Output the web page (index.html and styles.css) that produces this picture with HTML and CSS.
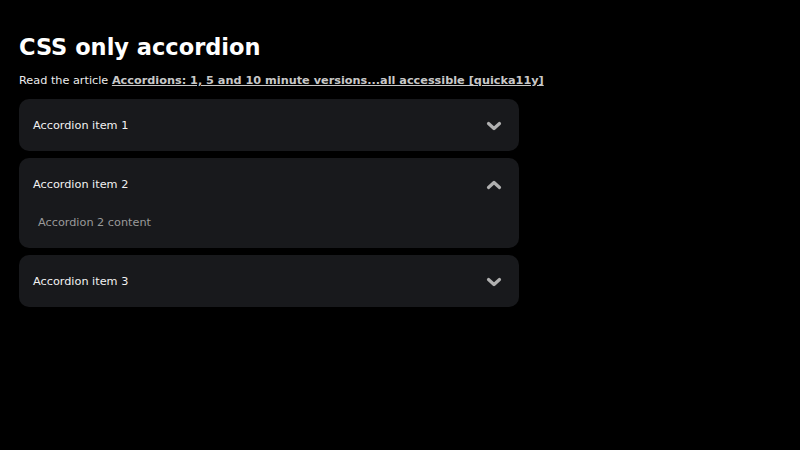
FILE: index.html
```html
<!DOCTYPE html>
<html lang="en">
<head>
<meta charset="utf-8">
<title>CSS only accordion</title>
<link rel="stylesheet" href="styles.css">
</head>
<body>
<main class="page">
  <h1 class="title">CSS only accordion</h1>
  <p class="intro">Read the article <a class="intro-link" href="#">Accordions: 1, 5 and 10 minute versions...all accessible [quicka11y]</a></p>
  <div class="accordion">
    <details class="item">
      <summary class="item-head"><span>Accordion item 1</span><svg class="chev" viewBox="0 0 16 10" width="16" height="10"><polyline points="2.5,2.5 8,7.5 13.5,2.5"/></svg></summary>
      <div class="item-body">Accordion 1 content</div>
    </details>
    <details class="item" open>
      <summary class="item-head"><span>Accordion item 2</span><svg class="chev" viewBox="0 0 16 10" width="16" height="10"><polyline points="2.5,2.5 8,7.5 13.5,2.5"/></svg></summary>
      <div class="item-body">Accordion 2 content</div>
    </details>
    <details class="item">
      <summary class="item-head"><span>Accordion item 3</span><svg class="chev" viewBox="0 0 16 10" width="16" height="10"><polyline points="2.5,2.5 8,7.5 13.5,2.5"/></svg></summary>
      <div class="item-body">Accordion 3 content</div>
    </details>
  </div>
</main>
</body>
</html>
```

FILE: styles.css
```css
html, body {
  margin: 0;
  padding: 0;
  background: #000;
}
body {
  font-family: "DejaVu Sans", sans-serif;
  color: #f0f0f0;
  font-size: 11.28px;
}
.page {
  padding: 33px 19px 19px;
}
.title {
  margin: 0;
  font-size: 22.5px;
  line-height: 28px;
  font-weight: bold;
  color: #fff;
}
.intro {
  margin: 12px 0 10px;
  line-height: 16px;
  color: #ececec;
}
.intro-link {
  color: #c8c8c8;
  font-weight: bold;
  text-decoration: underline;
}
.accordion {
  width: 500px;
  display: flex;
  flex-direction: column;
  gap: 7px;
}
.item {
  background: #18191c;
  border-radius: 10px;
}
.item-head {
  list-style: none;
  display: flex;
  align-items: center;
  justify-content: space-between;
  height: 52px;
  padding: 0 17px 0 14px;
  color: #f2f2f2;
  cursor: pointer;
}
.item-head::-webkit-details-marker {
  display: none;
}
.chev {
  fill: none;
  stroke: #b0b0b0;
  stroke-width: 3.2;
  stroke-linecap: round;
  stroke-linejoin: round;
  margin-top: 2px;
}
.item[open] .chev {
  transform: rotate(180deg);
}
.item-body {
  padding: 5px 19px 17px;
  line-height: 16px;
  color: #9a9a9a;
}
```
